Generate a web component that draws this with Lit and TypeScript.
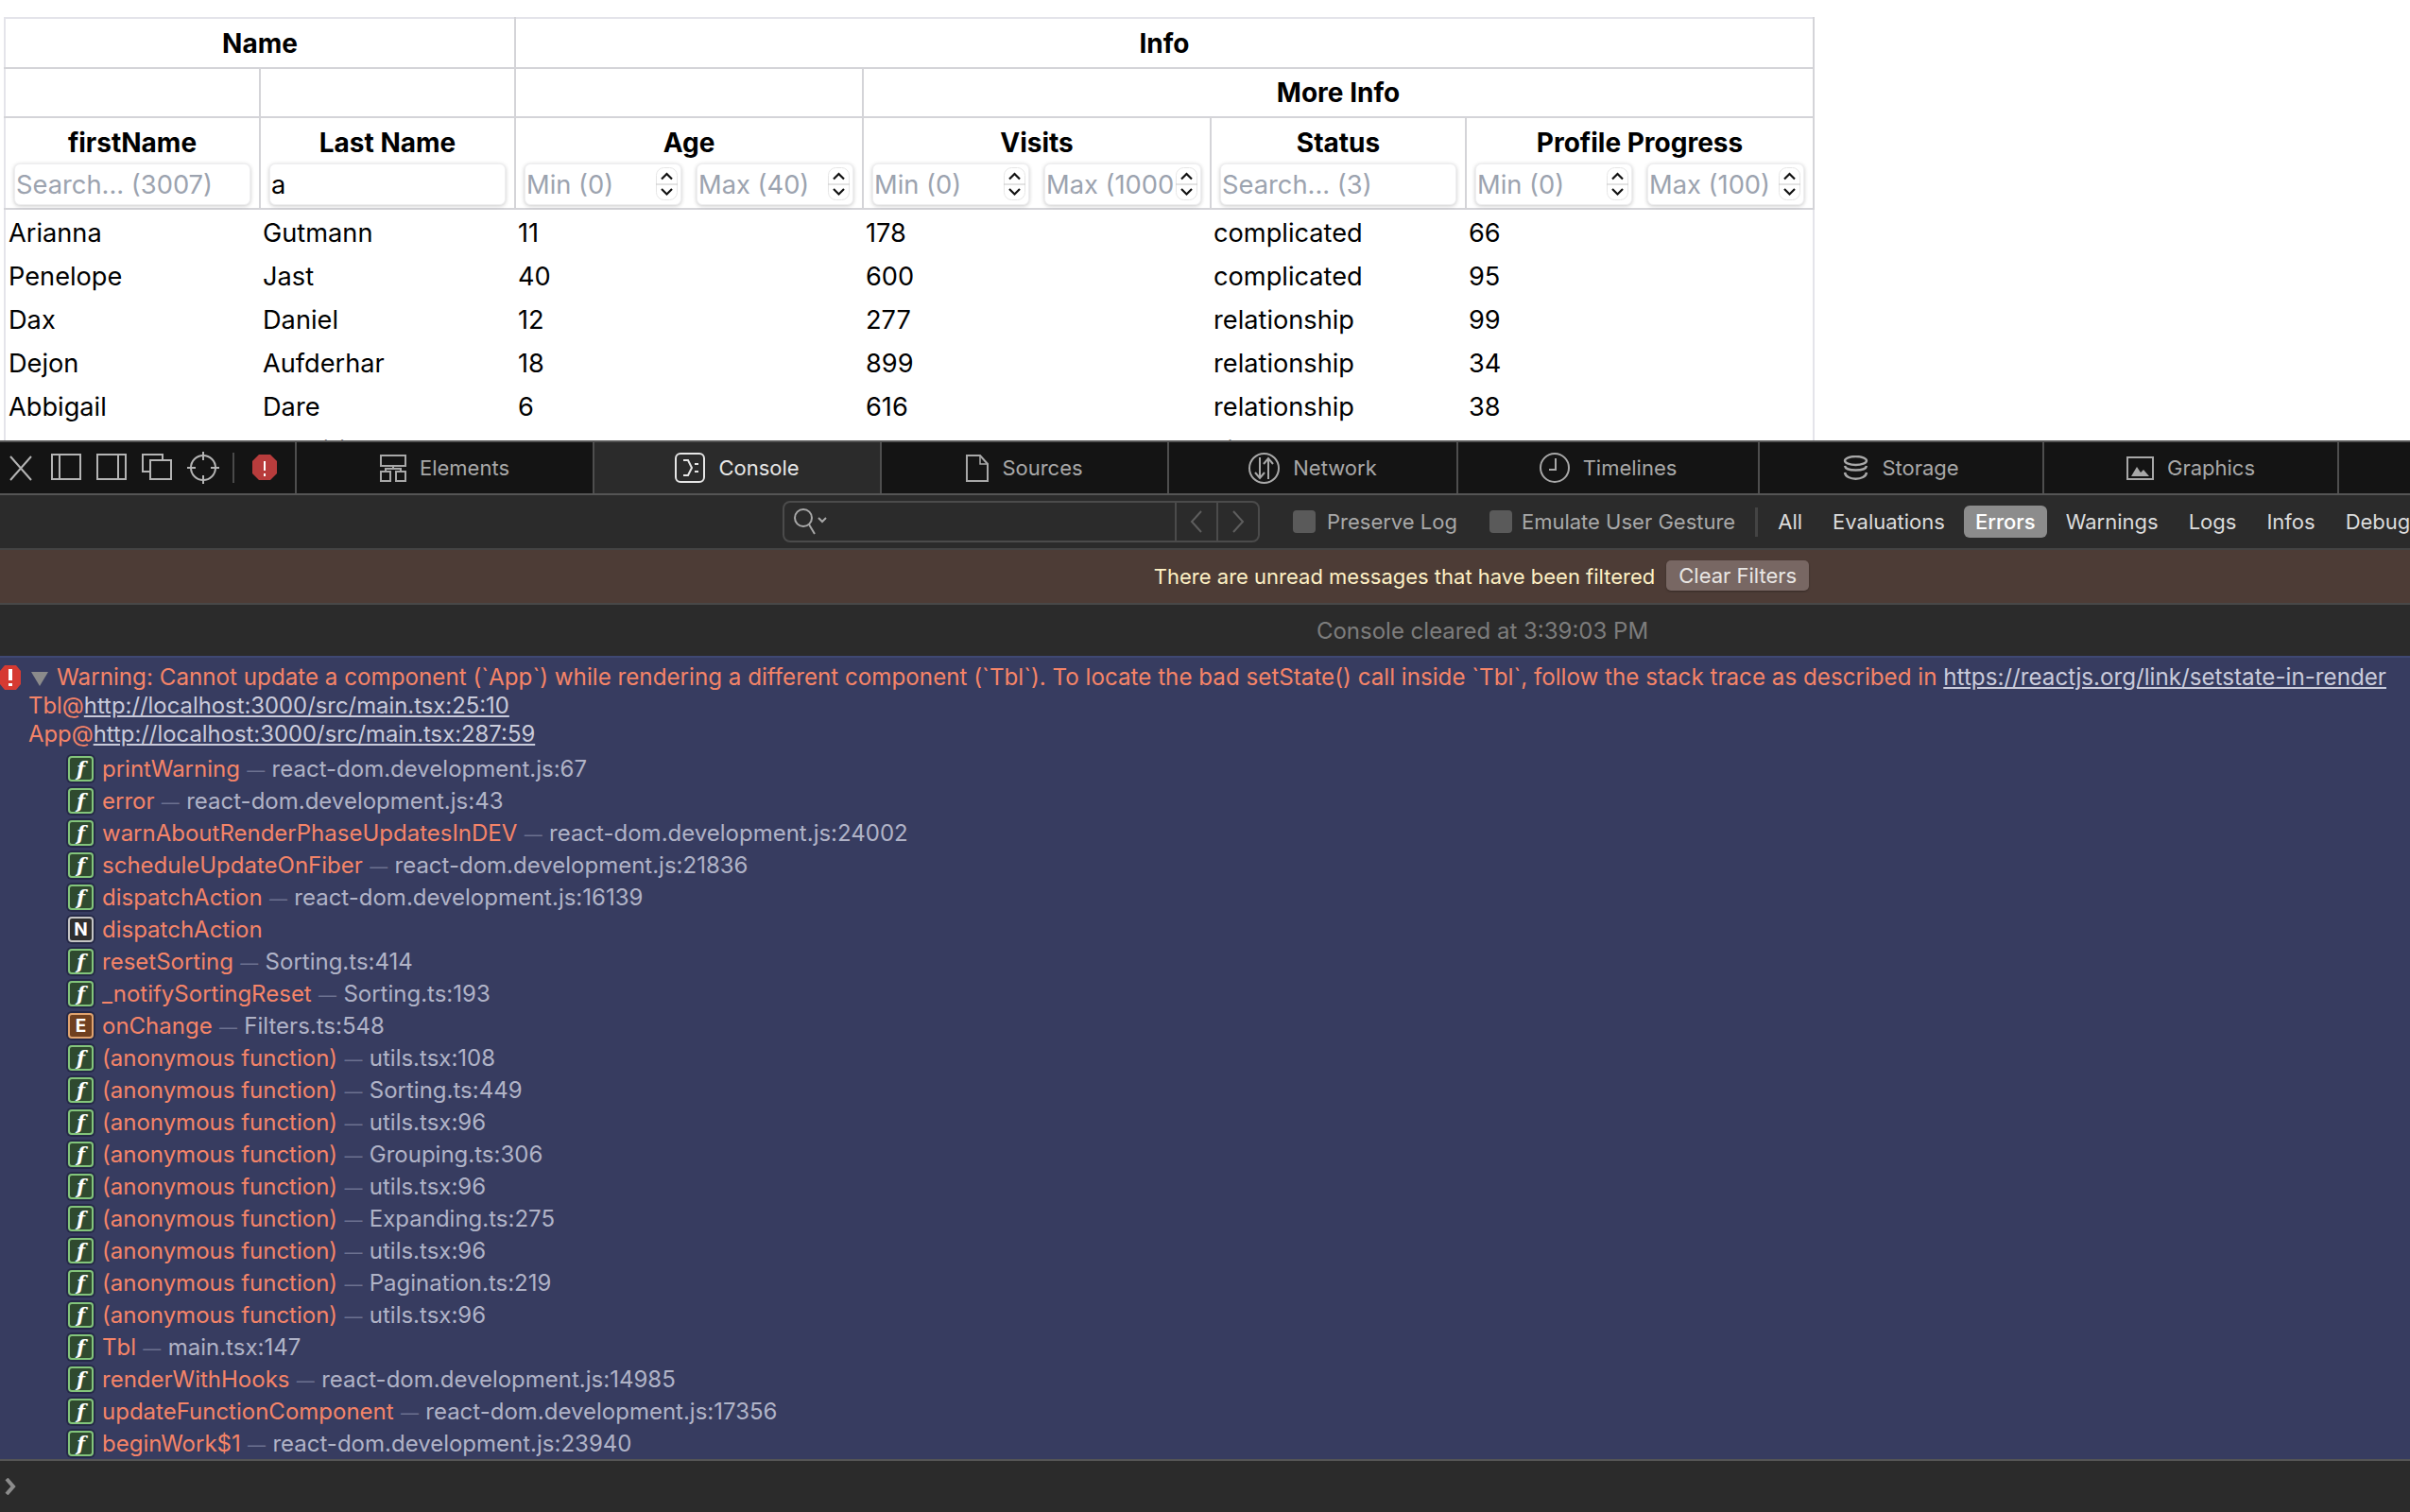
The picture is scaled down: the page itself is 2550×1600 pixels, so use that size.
import { LitElement, html, css, svg } from "lit";
import { customElement } from "lit/decorators.js";

const rows = [
  ["Arianna", "Gutmann", "11", "178", "complicated", "66"],
  ["Penelope", "Jast", "40", "600", "complicated", "95"],
  ["Dax", "Daniel", "12", "277", "relationship", "99"],
  ["Dejon", "Aufderhar", "18", "899", "relationship", "34"],
  ["Abbigail", "Dare", "6", "616", "relationship", "38"],
  ["Kaley", "Bashirian", "16", "754", "single", "17"],
];

const frames: [string, string, string][] = [
  ["f", "printWarning", "react-dom.development.js:67"],
  ["f", "error", "react-dom.development.js:43"],
  ["f", "warnAboutRenderPhaseUpdatesInDEV", "react-dom.development.js:24002"],
  ["f", "scheduleUpdateOnFiber", "react-dom.development.js:21836"],
  ["f", "dispatchAction", "react-dom.development.js:16139"],
  ["N", "dispatchAction", ""],
  ["f", "resetSorting", "Sorting.ts:414"],
  ["f", "_notifySortingReset", "Sorting.ts:193"],
  ["E", "onChange", "Filters.ts:548"],
  ["f", "(anonymous function)", "utils.tsx:108"],
  ["f", "(anonymous function)", "Sorting.ts:449"],
  ["f", "(anonymous function)", "utils.tsx:96"],
  ["f", "(anonymous function)", "Grouping.ts:306"],
  ["f", "(anonymous function)", "utils.tsx:96"],
  ["f", "(anonymous function)", "Expanding.ts:275"],
  ["f", "(anonymous function)", "utils.tsx:96"],
  ["f", "(anonymous function)", "Pagination.ts:219"],
  ["f", "(anonymous function)", "utils.tsx:96"],
  ["f", "Tbl", "main.tsx:147"],
  ["f", "renderWithHooks", "react-dom.development.js:14985"],
  ["f", "updateFunctionComponent", "react-dom.development.js:17356"],
  ["f", "beginWork$1", "react-dom.development.js:23940"],
];

const tabIcons: Record<string, unknown> = {
  Elements: svg`<svg width="28" height="29" viewBox="0 0 28 29" fill="none" stroke="currentColor" stroke-width="2"><rect x="1" y="1" width="26" height="11"/><rect x="1" y="18" width="10" height="10"/><rect x="17" y="18" width="10" height="10"/><path d="M14 12v3M6 18v-3h16v3"/></svg>`,
  Console: svg`<svg width="32" height="32" viewBox="0 0 32 32" fill="none" stroke="currentColor" stroke-width="2"><rect x="1" y="1" width="30" height="30" rx="5"/><path d="M9 8h5l4 8-4 8H9M21 12h4M21 20h4"/></svg>`,
  Sources: svg`<svg width="24" height="29" viewBox="0 0 24 29" fill="none" stroke="currentColor" stroke-width="2"><path d="M1 1h14l8 9v18H1z"/><path d="M15 1v9h8" stroke-width="1.5"/></svg>`,
  Network: svg`<svg width="33" height="33" viewBox="0 0 33 33" fill="none" stroke="currentColor" stroke-width="2"><circle cx="16.5" cy="16.5" r="15.5"/><path d="M12 5v22M7 21l5 6 5-6M21 28V6M16 12l5-6 5 6"/></svg>`,
  Timelines: svg`<svg width="32" height="32" viewBox="0 0 32 32" fill="none" stroke="currentColor" stroke-width="2"><circle cx="16" cy="16" r="15"/><path d="M17 6v12h-7"/></svg>`,
  Storage: svg`<svg width="27" height="27" viewBox="0 0 27 27" fill="none" stroke="currentColor" stroke-width="2.4"><ellipse cx="13.5" cy="5.5" rx="11.5" ry="4.5"/><path d="M2 11c1 6 22 6 23 0M2 18c1 9 22 9 23 0"/></svg>`,
  Graphics: svg`<svg width="29" height="25" viewBox="0 0 29 25" fill="none" stroke="currentColor" stroke-width="2"><rect x="1" y="1" width="27" height="23"/><path d="M5 21l6-10 4 6 3-3 6 7z" fill="currentColor" stroke="none"/></svg>`,
};

@customElement("app-root")
export class AppRoot extends LitElement {
  static styles = css`
    :host {
      display: flex;
      flex-direction: column;
      height: 1600px;
      overflow: hidden;
      font-family: Inter, "Liberation Sans", sans-serif;
      background: #fff;
    }
    .page {
      height: 466px;
      flex: none;
      overflow: hidden;
      padding: 18px 0 0 4px;
      box-sizing: border-box;
      font-size: 27.2px;
      color: #000;
    }
    table {
      table-layout: fixed;
      border-collapse: collapse;
      width: 1915px;
    }
    .c-name { width: 270px; }
    .c-wide { width: 368px; }
    th {
      border: 2px solid #d4d4d8;
      font-weight: 700;
      font-size: 28px;
      padding: 0;
      height: 50.5px;
      text-align: center;
    }
    thead tr:first-child th {
      border-top-color: #e4e4ea;
      height: 48.5px;
      padding-top: 2px;
    }
    th:first-child { border-left-color: #e4e4ea; }
    .label { display: block; line-height: 34px; margin-top: 9px; height: 39px; }
    .cols th { height: 95px; vertical-align: top; }
    .single, .range {
      display: flex;
      gap: 16px;
      padding: 0 9px;
    }
    .box {
      position: relative;
      flex: 1;
      min-width: 0;
      height: 44px;
      box-sizing: border-box;
      border: 1px solid #eeeef0;
      border-radius: 6px;
      box-shadow: 0 1px 4px rgba(0, 0, 0, 0.22);
      background: #fff;
    }
    input {
      display: block;
      width: 100%;
      height: 100%;
      box-sizing: border-box;
      border: none;
      outline: none;
      background: transparent;
      padding: 0 0 0 1px;
      font: 400 27.3px Inter, "Liberation Sans", sans-serif;
      color: #000;
    }
    input::placeholder { color: #9ca3af; opacity: 1; }
    .range input { padding-right: 28px; }
    .spin {
      position: absolute;
      right: 3px;
      top: 3px;
    }
    td {
      height: 46px;
      padding: 0 0 0 3px;
      font-weight: 400;
      white-space: nowrap;
    }
    tbody tr:first-child td { padding-top: 1px; }
    td:first-child { border-left: 2px solid #e4e4ea; }
    td:last-child { border-right: 2px solid #e4e4ea; }

    .tools {
      flex: 1;
      min-height: 0;
      display: flex;
      flex-direction: column;
      background: #2b2b2b;
      font-size: 22px;
      color: #a8a8a8;
      border-top: 2px solid #555;
    }
    .tabs {
      flex: none;
      height: 54px;
      display: grid;
      grid-template-columns: 314px 315px 304px 304px 306px 319px 301px 312px 1fr;
      background: #141414;
      border-bottom: 2px solid #555;
    }
    .tab {
      display: flex;
      align-items: center;
      justify-content: center;
      gap: 14px;
      border-right: 2px solid #4e4e4e;
      box-sizing: border-box;
    }
    .tab.on { background: #2b2b2b; color: #e6e6e6; }
    .last { border: none; }
    .side { position: relative; justify-content: flex-start; padding-left: 10px; gap: 0; }
    .side svg { display: block; }
    .filter {
      flex: none;
      height: 56px;
      display: flex;
      align-items: center;
      padding-left: 828px;
      border-bottom: 2px solid #444;
      overflow: hidden;
      white-space: nowrap;
    }
    .search {
      flex: none;
      width: 505px;
      height: 44px;
      box-sizing: border-box;
      border: 2px solid #4b4b4b;
      border-radius: 8px;
      display: flex;
      align-items: center;
    }
    .search .q { flex: 1; padding-left: 9px; display: flex; }
    .search .nav {
      width: 42px;
      height: 100%;
      border-left: 2px solid #4b4b4b;
      display: flex;
      align-items: center;
      justify-content: center;
    }
    .check {
      flex: none;
      width: 24px;
      height: 24px;
      border-radius: 4px;
      background: #5a5a5a;
      margin: 0 12px 0 35px;
    }
    .check + span + .check { margin: 0 10px 0 34px; }
    .sep {
      flex: none;
      width: 3px;
      height: 31px;
      background: #444;
      margin: 0 9px 0 21px;
    }
    .level { color: #dcdcdc; padding: 0 12px; line-height: 34px; margin-right: 8px; }
    .level.on { background: #8c8c8c; color: #fff; border-radius: 6px; font-weight: 500; }
    .notice, .cleared {
      flex: none;
      display: flex;
      align-items: center;
      justify-content: center;
      padding-left: 585px;
    }
    .notice {
      height: 56px;
      background: #4d3c36;
      color: #fdf0c4;
      gap: 12px;
      border-bottom: 2px solid #484848;
    }
    .notice button {
      height: 32px;
      padding: 0 13px;
      border: none;
      border-radius: 5px;
      background: #786763;
      box-shadow: 0 1px 2px rgba(0, 0, 0, 0.3);
      color: #e9e6e4;
      font: inherit;
      margin-top: -2px;
    }
    .cleared { height: 54px; color: #7d7d7d; font-size: 24px; padding-left: 587px; }
    .msg {
      flex: 1;
      min-height: 0;
      overflow: hidden;
      background: #373c60;
      border-top: 2px solid #3f4873;
      color: #f58468;
      position: relative;
      box-sizing: border-box;
      padding: 6px 0 0 30px;
      font-size: 24px;
    }
    .line { line-height: 30px; white-space: nowrap; font-size: 23.85px; }
    .line a { color: #c9cbdb; text-decoration: underline; }
    .head { padding-left: 30px; font-size: 24.2px; }
    .err { position: absolute; left: 0; top: 8px; }
    .tri { position: absolute; left: 33px; top: 15px; }
    .frames { margin-top: 4px; padding-left: 42px; }
    .frame {
      height: 34px;
      display: flex;
      align-items: center;
      gap: 9px;
      white-space: nowrap;
    }
    .kind {
      flex: none;
      width: 27px;
      height: 27px;
      box-sizing: border-box;
      border-radius: 4px;
      border: 2px solid #83c57b;
      background: #2f4a2f;
      box-shadow: 0 0 0 2px #252947;
      color: #fff;
      text-align: center;
      font: italic 700 21px/23px "DejaVu Serif", serif;
    }
    .kind.N, .kind.E { font: 700 19px/23px Inter, sans-serif; }
    .kind.N { border-color: #c4c4c4; background: #2e2e2e; }
    .kind.E { border-color: #e0a36f; background: #70401f; }
    .dash { color: #6c7190; font-size: 19px; margin: 0 2px; }
    .file { color: #b0b3c7; }
    .prompt {
      flex: none;
      height: 54px;
      border-top: 2px solid #555;
      display: flex;
      align-items: center;
      padding-left: 5px;
    }
  `;

  private textBox(ph: string, value = "") {
    return html`<div class="single"><div class="box"><input type="text" placeholder=${ph} .value=${value} /></div></div>`;
  }

  private numBox(ph: string) {
    return html`<div class="box">
      <input type="text" placeholder=${ph} />
      <svg class="spin" width="23" height="35" viewBox="0 0 23 35" fill="none">
        <rect x=".5" y=".5" width="22" height="34" rx="8" fill="#fff" stroke="#e6e6e6" />
        <path d="M0 18h23" stroke="#c8c8c8" />
        <path d="M6 12.5l5.5-5.5 5.5 5.5M6 23l5.5 5.5L17 23" stroke="#111" stroke-width="2.2" />
      </svg>
    </div>`;
  }

  private range(min: string, max: string) {
    return html`<div class="range">${this.numBox(min)}${this.numBox(max)}</div>`;
  }

  private renderTable() {
    return html`<table>
      <colgroup>
        <col class="c-name" /><col class="c-name" /><col class="c-wide" /><col class="c-wide" /><col class="c-name" /><col class="c-wide" />
      </colgroup>
      <thead>
        <tr><th colspan="2">Name</th><th colspan="4">Info</th></tr>
        <tr><th></th><th></th><th></th><th colspan="3">More Info</th></tr>
        <tr class="cols">
          <th><span class="label">firstName</span>${this.textBox("Search... (3007)")}</th>
          <th><span class="label">Last Name</span>${this.textBox("", "a")}</th>
          <th><span class="label">Age</span>${this.range("Min (0)", "Max (40)")}</th>
          <th><span class="label">Visits</span>${this.range("Min (0)", "Max (1000)")}</th>
          <th><span class="label">Status</span>${this.textBox("Search... (3)")}</th>
          <th><span class="label">Profile Progress</span>${this.range("Min (0)", "Max (100)")}</th>
        </tr>
      </thead>
      <tbody>
        ${rows.map((r) => html`<tr>${r.map((c) => html`<td>${c}</td>`)}</tr>`)}
      </tbody>
    </table>`;
  }

  private renderTabs() {
    const names = ["Elements", "Console", "Sources", "Network", "Timelines", "Storage", "Graphics"];
    return html`<div class="tabs">
      <div class="tab side">
        <svg width="290" height="34" viewBox="0 0 290 34" fill="none" stroke="#b4b4b4" stroke-width="2">
          <path d="M1 5l22 25M23 5L1 30" />
          <rect x="45" y="3" width="30" height="26" /><path d="M53 3v26" />
          <rect x="93" y="3" width="30" height="26" /><path d="M115 3v26" />
          <path d="M150 21h-9V3h21v5" /><rect x="149" y="9" width="22" height="20" />
          <circle cx="205" cy="17" r="13" /><path d="M205 0v9M205 25v9M188 17h9M213 17h9" />
          <path d="M237 1v32" stroke="#4a4a4a" />
          <path d="M264 3h12l7 7v13l-7 7h-12l-7-7V10z" fill="#b83c3c" stroke="none" />
          <path d="M270 10v10M270 23v3" stroke="#fff" />
        </svg>
      </div>
      ${names.map(
        (n) => html`<div class="tab ${n === "Console" ? "on" : ""}">${tabIcons[n]}<span>${n}</span></div>`
      )}
      <div class="tab last"></div>
    </div>`;
  }

  private renderFilter() {
    return html`<div class="filter">
      <div class="search">
        <div class="q">
          <svg width="36" height="30" viewBox="0 0 36 30" fill="none" stroke="#a8a8a8" stroke-width="2">
            <circle cx="11" cy="11" r="9" /><path d="M17 18l6 10M27 11l4 4 4-4" />
          </svg>
        </div>
        <div class="nav"><svg width="14" height="26" viewBox="0 0 14 26" fill="none" stroke="#5e5e5e" stroke-width="2"><path d="M12 2L2 13l10 11" /></svg></div>
        <div class="nav"><svg width="14" height="26" viewBox="0 0 14 26" fill="none" stroke="#5e5e5e" stroke-width="2"><path d="M2 2l10 11L2 24" /></svg></div>
      </div>
      <div class="check"></div><span>Preserve Log</span>
      <div class="check"></div><span>Emulate User Gesture</span>
      <div class="sep"></div>
      <span class="level">All</span>
      <span class="level">Evaluations</span>
      <span class="level on">Errors</span>
      <span class="level">Warnings</span>
      <span class="level">Logs</span>
      <span class="level">Infos</span>
      <span class="level">Debugs</span>
    </div>`;
  }

  private renderMessage() {
    return html`<div class="msg">
      <svg class="err" width="22" height="26" viewBox="0 0 22 26">
        <path d="M5 0h12l5 6v14l-5 6H5l-5-6V6z" fill="#d63a32" />
        <path d="M9 4h4v12H9zM9 19h4v3H9z" fill="#fff" />
      </svg>
      <svg class="tri" width="18" height="15" viewBox="0 0 18 15"><path d="M0 0h18L9 15z" fill="#8b8b8b" /></svg>
      <div class="line head">Warning: Cannot update a component (\`App\`) while rendering a different component (\`Tbl\`). To locate the bad setState() call inside \`Tbl\`, follow the stack trace as described in <a>https://reactjs.org/link/setstate-in-render</a></div>
      <div class="line">Tbl@<a>http://localhost:3000/src/main.tsx:25:10</a></div>
      <div class="line">App@<a>http://localhost:3000/src/main.tsx:287:59</a></div>
      <div class="frames">
        ${frames.map(
          ([k, name, file]) => html`<div class="frame">
            <span class="kind ${k}">${k}</span>
            <span>${name}${file ? html`<span class="dash"> — </span><span class="file">${file}</span>` : ""}</span>
          </div>`
        )}
      </div>
    </div>`;
  }

  render() {
    return html`
      <div class="page">${this.renderTable()}</div>
      <div class="tools">
        ${this.renderTabs()}
        ${this.renderFilter()}
        <div class="notice"><span>There are unread messages that have been filtered</span><button>Clear Filters</button></div>
        <div class="cleared">Console cleared at 3:39:03 PM</div>
        ${this.renderMessage()}
        <div class="prompt">
          <svg width="12" height="18" viewBox="0 0 12 18" fill="none" stroke="#8c8c8c" stroke-width="4"><path d="M2 1l7 8-7 8" /></svg>
        </div>
      </div>
    `;
  }
}
